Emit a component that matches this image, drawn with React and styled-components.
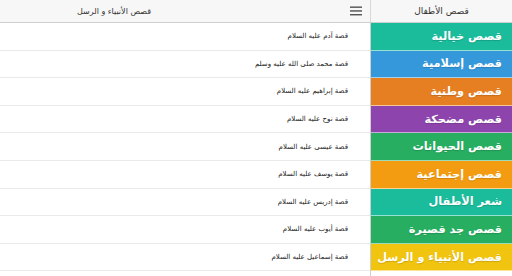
import React from "react";
import styled, { createGlobalStyle } from "styled-components";

const Global = createGlobalStyle`
  html, body {
    margin: 0;
    padding: 0;
    background: #fff;
  }
  * { box-sizing: border-box; }
`;

const Page = styled.div`
  width: 512px;
  height: 276px;
  overflow: hidden;
  font-family: "DejaVu Sans", "Noto Sans", sans-serif;
  background: #fff;
`;

const Header = styled.div`
  display: flex;
  height: 23px;
  background: #f7f7f7;
  border-bottom: 1px solid #cfcfcf;
`;

const HeaderMain = styled.div`
  flex: 1;
  display: flex;
  align-items: center;
  justify-content: space-between;
  padding-right: 8px;
`;

const HeaderTitle = styled.div`
  width: 228px;
  text-align: center;
  direction: rtl;
  font-size: 8px;
  color: #333;
  white-space: nowrap;
`;

const MenuButton = styled.div`
  display: flex;
  align-items: center;
  color: #444;
`;

const HeaderSide = styled.div`
  width: 142px;
  display: flex;
  align-items: center;
  justify-content: center;
  direction: rtl;
  font-size: 9px;
  color: #333;
  border-left: 1px solid #d8d8d8;
`;

const Body = styled.div`
  display: flex;
  height: 253px;
`;

const StoryList = styled.div`
  flex: 1;
  display: flex;
  flex-direction: column;
`;

const StoryRow = styled.div`
  height: 27.6px;
  flex-shrink: 0;
  display: flex;
  align-items: center;
  justify-content: flex-start;
  padding-right: 22px;
  border-bottom: 1px solid #e9e9e9;
  direction: rtl;
  font-size: 7px;
  color: #222;
  white-space: nowrap;
`;

const CategoryList = styled.div`
  width: 142px;
  display: flex;
  flex-direction: column;
  border-left: 1px solid #cfcfcf;
`;

const Category = styled.div`
  height: 27.6px;
  flex-shrink: 0;
  display: flex;
  align-items: center;
  padding-right: 10px;
  direction: rtl;
  background: ${p => p.color};
  border-bottom: 1px solid rgba(255, 255, 255, 0.55);
  color: #fff;
  font-size: 11.3px;
  font-weight: bold;
  white-space: nowrap;
  text-shadow: 0 1px 1px rgba(0, 0, 0, 0.15);
`;

const stories = [
  "قصة آدم عليه السلام",
  "قصة محمد صلى الله عليه وسلم",
  "قصة إبراهيم عليه السلام",
  "قصة نوح عليه السلام",
  "قصة عيسى عليه السلام",
  "قصة يوسف عليه السلام",
  "قصة إدريس عليه السلام",
  "قصة أيوب عليه السلام",
  "قصة إسماعيل عليه السلام",
];

const categories = [
  { label: "قصص خيالية", color: "#1abc9c" },
  { label: "قصص إسلامية", color: "#3498db" },
  { label: "قصص وطنية", color: "#e67e22" },
  { label: "قصص مضحكة", color: "#8e44ad" },
  { label: "قصص الحيوانات", color: "#27ae60" },
  { label: "قصص إجتماعية", color: "#f39c12" },
  { label: "شعر الأطفال", color: "#1abc9c" },
  { label: "قصص جد قصيرة", color: "#27ae60" },
  { label: "قصص الأنبياء و الرسل", color: "#f1c40f" },
];

const Hamburger = () => (
  <svg width="12" height="10" viewBox="0 0 12 10">
    <rect x="0" y="0.5" width="12" height="1.3" fill="currentColor" />
    <rect x="0" y="4.3" width="12" height="1.3" fill="currentColor" />
    <rect x="0" y="8.1" width="12" height="1.3" fill="currentColor" />
  </svg>
);

export default function App() {
  return (
    <Page>
      <Global />
      <Header>
        <HeaderMain>
          <HeaderTitle>قصص الأنبياء و الرسل</HeaderTitle>
          <MenuButton>
            <Hamburger />
          </MenuButton>
        </HeaderMain>
        <HeaderSide>قصص الأطفال</HeaderSide>
      </Header>
      <Body>
        <StoryList>
          {stories.map(s => (
            <StoryRow key={s}>{s}</StoryRow>
          ))}
        </StoryList>
        <CategoryList>
          {categories.map(c => (
            <Category key={c.label} color={c.color}>
              {c.label}
            </Category>
          ))}
        </CategoryList>
      </Body>
    </Page>
  );
}
